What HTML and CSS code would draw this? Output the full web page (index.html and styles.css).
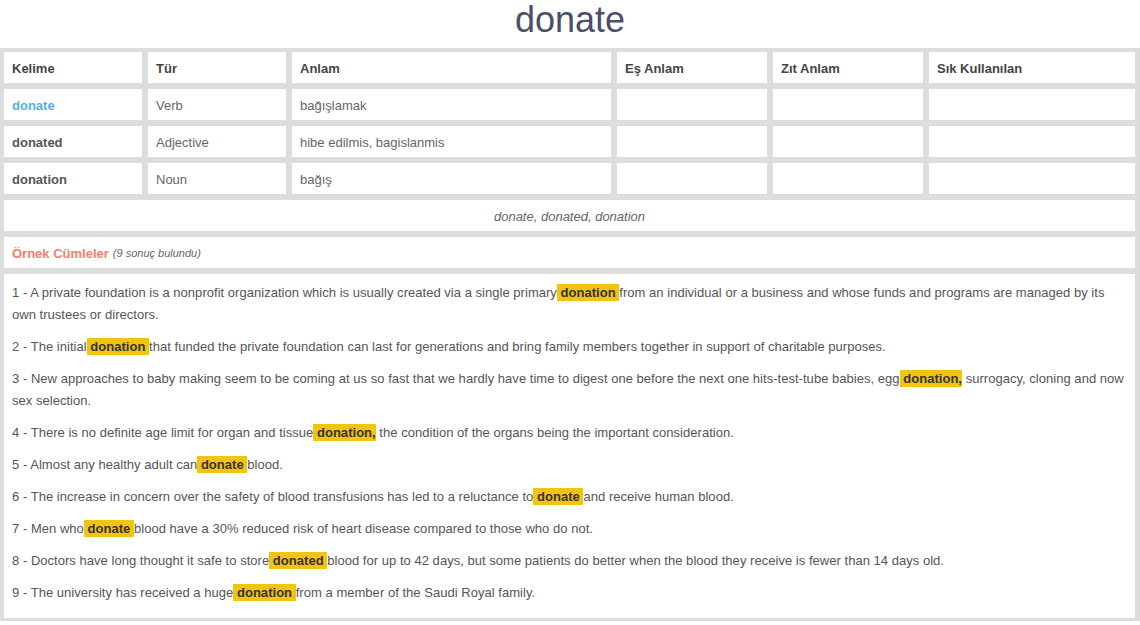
FILE: index.html
```html
<!DOCTYPE html>
<html lang="tr">
<head>
<meta charset="utf-8">
<title>donate</title>
<link rel="stylesheet" href="styles.css">
</head>
<body>
<h1 class="title">donate</h1>
<div class="board">
  <div class="cell head">Kelime</div>
  <div class="cell head">Tür</div>
  <div class="cell head">Anlam</div>
  <div class="cell head">Eş Anlam</div>
  <div class="cell head">Zıt Anlam</div>
  <div class="cell head">Sık Kullanılan</div>

  <div class="cell word link">donate</div>
  <div class="cell">Verb</div>
  <div class="cell">bağışlamak</div>
  <div class="cell"></div>
  <div class="cell"></div>
  <div class="cell"></div>

  <div class="cell word">donated</div>
  <div class="cell">Adjective</div>
  <div class="cell">hibe edilmis, bagislanmis</div>
  <div class="cell"></div>
  <div class="cell"></div>
  <div class="cell"></div>

  <div class="cell word">donation</div>
  <div class="cell">Noun</div>
  <div class="cell">bağış</div>
  <div class="cell"></div>
  <div class="cell"></div>
  <div class="cell"></div>

  <div class="cell full forms">donate, donated, donation</div>

  <div class="cell full examples-head"><span class="ex-title">Örnek Cümleler</span> <span class="ex-count">(9 sonuç bulundu)</span></div>

  <div class="cell full sentences">
    <p>1 - A private foundation is a nonprofit organization which is usually created via a single primary<mark> donation </mark>from an individual or a business and whose funds and programs are managed by its own trustees or directors.</p>
    <p>2 - The initial<mark> donation </mark>that funded the private foundation can last for generations and bring family members together in support of charitable purposes.</p>
    <p>3 - New approaches to baby making seem to be coming at us so fast that we hardly have time to digest one before the next one hits-test-tube babies, egg<mark> donation,</mark> surrogacy, cloning and now sex selection.</p>
    <p>4 - There is no definite age limit for organ and tissue<mark> donation,</mark> the condition of the organs being the important consideration.</p>
    <p>5 - Almost any healthy adult can<mark> donate </mark>blood.</p>
    <p>6 - The increase in concern over the safety of blood transfusions has led to a reluctance to<mark> donate </mark>and receive human blood.</p>
    <p>7 - Men who<mark> donate </mark>blood have a 30% reduced risk of heart disease compared to those who do not.</p>
    <p>8 - Doctors have long thought it safe to store<mark> donated </mark>blood for up to 42 days, but some patients do better when the blood they receive is fewer than 14 days old.</p>
    <p>9 - The university has received a huge<mark> donation </mark>from a member of the Saudi Royal family.</p>
  </div>
</div>
</body>
</html>
```

FILE: styles.css
```css
html, body {
  margin: 0;
  padding: 0;
  background: #ffffff;
}

body {
  font-family: "Liberation Sans", Arial, sans-serif;
  color: #555555;
  font-size: 13px;
}

.title {
  margin: 0 0 8px;
  text-align: center;
  font-weight: normal;
  font-size: 36px;
  line-height: 40px;
  color: #4a5068;
}

.board {
  display: grid;
  grid-template-columns: 138px 138px 319px 150px 150px 206px;
  grid-template-rows: repeat(6, 31px) auto;
  gap: 6px;
  padding: 4px 5px 3px 4px;
  background: #dddddd;
  width: 1131px;
  border-right: 1px solid #eeeeee;
}

.cell {
  background: #ffffff;
  display: flex;
  align-items: center;
  padding: 1px 8px 0;
  color: #666666;
  font-size: 13px;
  white-space: nowrap;
}

.head {
  font-weight: bold;
  color: #444444;
}

.word {
  font-weight: bold;
  color: #555555;
}

.word.link {
  color: #5aade2;
}

.full {
  grid-column: 1 / -1;
}

.forms {
  justify-content: center;
  font-style: italic;
  font-size: 13px;
  color: #666666;
}

.ex-title {
  color: #f47d6e;
  font-weight: bold;
  font-size: 13px;
}

.ex-count {
  font-style: italic;
  font-size: 11px;
  color: #666666;
  margin-left: 4px;
}

.sentences {
  display: block;
  white-space: normal;
  padding: 8px 8px 4px;
  font-size: 13px;
  line-height: 22px;
  letter-spacing: 0.03px;
  color: #555555;
}

.sentences p {
  margin: 0 0 10px;
}

.sentences mark {
  background: #f1c40f;
  color: #333333;
  font-weight: bold;
  padding: 1px 0;
}
```
